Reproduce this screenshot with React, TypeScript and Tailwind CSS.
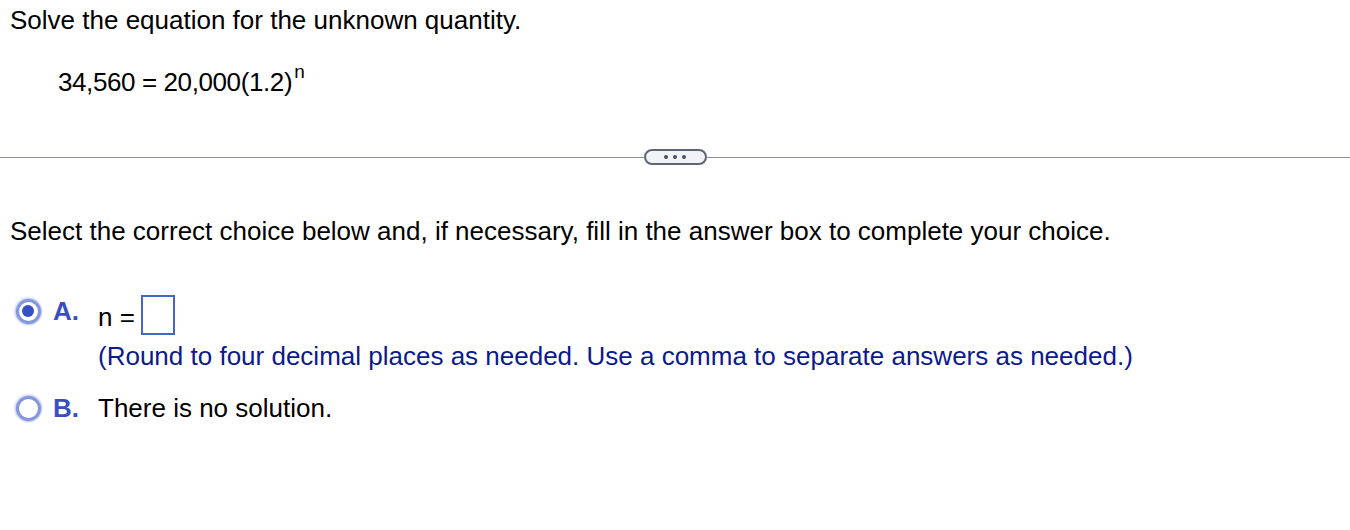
import React from "react";

function Radio({ checked }: { checked?: boolean }) {
  return (
    <span className="relative flex h-[30px] w-[30px] items-center justify-center">
      <span className="absolute inset-0 rounded-full bg-[#f3f4f9]" />
      <span className="relative flex h-[25px] w-[25px] items-center justify-center rounded-full border-[3px] border-[#8396de] bg-white shadow-[0_0_1px_1px_rgba(131,150,222,0.45)]">
        {checked && <span className="h-[12px] w-[12px] rounded-full bg-[#3550c8]" />}
      </span>
    </span>
  );
}

export default function App() {
  return (
    <div
      className="h-[530px] w-[1350px] bg-white text-black"
      style={{ fontFamily: '"Liberation Sans", Arial, sans-serif' }}
    >
      <div className="px-[10px] pt-[5px] text-[26px] leading-[30px]">
        Solve the equation for the unknown quantity.
      </div>
      <div className="pl-[58px] pt-[32px] text-[26px] leading-[30px] tracking-[-0.4px]">
        34,560 = 20,000(1.2)
        <sup className="relative top-[-13px] ml-[2px] text-[19px]">n</sup>
      </div>

      <div className="mt-[52px] flex items-center">
        <div className="h-px flex-1 bg-[#8b8e9c]" />
        <div className="flex h-[16px] w-[63px] items-center justify-center gap-[5px] rounded-full border-2 border-[#5e6675] bg-[#f2f3f6]">
          <span className="h-[4px] w-[4px] rounded-full bg-[#4a5060]" />
          <span className="h-[4px] w-[4px] rounded-full bg-[#4a5060]" />
          <span className="h-[4px] w-[4px] rounded-full bg-[#4a5060]" />
        </div>
        <div className="h-px flex-1 bg-[#8b8e9c]" />
      </div>

      <div className="px-[10px] pt-[51px] text-[26px] leading-[30px]">
        Select the correct choice below and, if necessary, fill in the answer box to complete your choice.
      </div>

      <div className="mt-[49px] flex items-start pl-[13px]">
        <span className="mt-[1px]">
          <Radio checked />
        </span>
        <span className="ml-[10px] mt-[1px] w-[45px] text-[26px] font-bold leading-[30px] text-[#3a4fbf]">A.</span>
        <div className="flex flex-col">
          <div className="flex items-start">
            <span className="mt-[7px] text-[26px] leading-[30px]">n =</span>
            <span className="ml-[6px] h-[40px] w-[34px] border-2 border-[#4366c9] bg-white" />
          </div>
          <div className="mt-[6px] text-[26px] leading-[30px] text-[#0b1a8c]">
            (Round to four decimal places as needed. Use a comma to separate answers as needed.)
          </div>
        </div>
      </div>

      <div className="mt-[22px] flex items-center pl-[13px]">
        <Radio />
        <span className="ml-[10px] w-[45px] text-[26px] font-bold leading-[30px] text-[#3a4fbf]">B.</span>
        <span className="text-[26px] leading-[30px]">There is no solution.</span>
      </div>
    </div>
  );
}
